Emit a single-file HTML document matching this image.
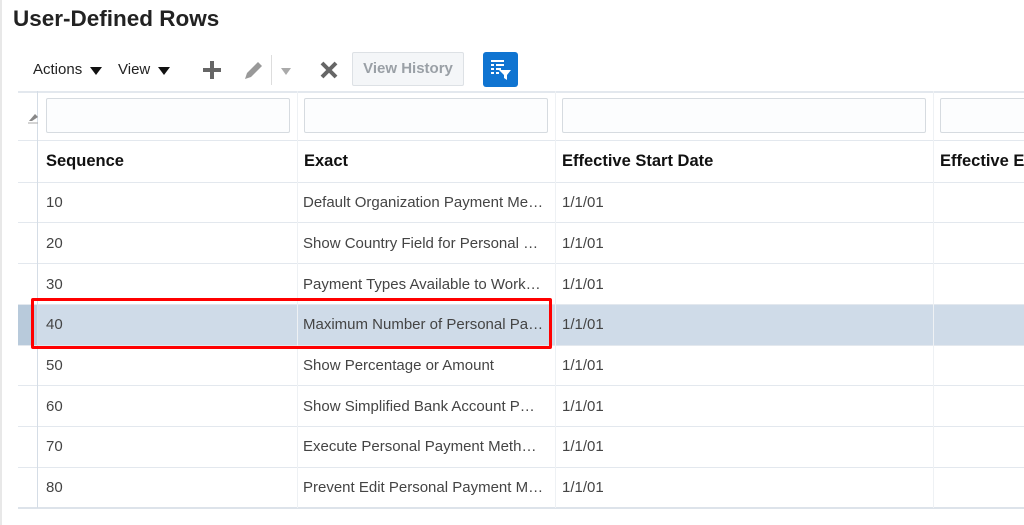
<!DOCTYPE html>
<html><head><style>
*{margin:0;padding:0;box-sizing:border-box}
html,body{width:1024px;height:525px;overflow:hidden}
body{background:#fff;font-family:"Liberation Sans",Arial,sans-serif;position:relative;color:#333}
.a{position:absolute}
h1{position:absolute;left:13px;top:6px;font-size:22.5px;font-weight:bold;color:#222}
.tb{font-size:15px;color:#222;top:61px}
.hl{position:absolute;height:1px;background:#e3e8ee;left:18px;right:0}
.vl{position:absolute;width:1px;background:#eef1f4}
.inp{position:absolute;top:98px;height:35px;border:1px solid #d6dbe0;background:#fcfdfe;border-radius:2px}
.hd{position:absolute;top:152px;font-size:16.5px;font-weight:bold;color:#111;white-space:nowrap}
.c{position:absolute;font-size:15px;color:#444;white-space:nowrap}
</style></head><body>
<div class="a" style="left:0;top:0;width:1024px;height:525px;overflow:hidden">
<div class="a" style="left:0;top:0;width:2px;height:525px;background:#e8e8e8"></div>
<h1>User-Defined Rows</h1>
<div class="a tb" style="left:33px">Actions</div>
<svg class="a" style="left:90px;top:67px" width="12" height="8"><path d="M0 0H12L6 8Z" fill="#111"/></svg>
<div class="a tb" style="left:118px">View</div>
<svg class="a" style="left:158px;top:67px" width="12" height="8"><path d="M0 0H12L6 8Z" fill="#111"/></svg>
<svg class="a" style="left:203px;top:61px" width="18" height="18"><path d="M7 0h4v7h7v4h-7v7h-4v-7h-7v-4h7z" fill="#666"/></svg>
<svg class="a" style="left:243px;top:59px" width="22" height="22"><path d="M2 20l2-6 11-11 4 4-11 11z" fill="#999"/></svg>
<div class="a" style="left:271px;top:55px;width:1px;height:30px;background:#ddd"></div>
<svg class="a" style="left:281px;top:68px" width="10" height="7"><path d="M0 0H10L5 7Z" fill="#aaa"/></svg>
<svg class="a" style="left:320px;top:61px" width="18" height="18"><path d="M2 2L16 16M16 2L2 16" stroke="#666" stroke-width="4"/></svg>
<div class="a" style="left:352px;top:52px;width:112px;height:34px;border:1px solid #dde1e5;background:#f4f6f8;border-radius:2px;color:#9aa0a6;font-weight:bold;font-size:15px;text-align:center;line-height:32px">View History</div>
<div class="a" style="left:483px;top:52px;width:35px;height:35px;background:#0f74d1;border-radius:3px"></div>
<svg class="a" style="left:490px;top:59px" width="22" height="22"><path d="M1 2h13M1 6h3M6 6h8M1 10h3M6 10h5M1 14h3M6 14h3" stroke="#fff" stroke-width="2"/><path d="M9 11h12l-4 5v5l-3-2v-3z" fill="#fff"/></svg>
<div class="a" style="left:18px;top:91px;right:0;height:2px;background:#e3e8ee"></div>
<div class="hl" style="top:140px"></div>
<div class="hl" style="top:182px"></div>
<div class="a" style="left:18px;top:304px;right:0;height:41px;background:#cfdbe8"></div>
<div class="a" style="left:18px;top:304px;width:20px;height:41px;background:#b8cadb"></div>
<div class="hl" style="top:222px"></div><div class="hl" style="top:263px"></div><div class="hl" style="top:304px"></div><div class="hl" style="top:345px"></div><div class="hl" style="top:385px"></div><div class="hl" style="top:426px"></div><div class="hl" style="top:467px"></div>
<div class="a" style="left:18px;top:507px;right:0;height:2px;background:#dde3ea"></div>
<div class="vl" style="left:37px;top:91px;height:417px;background:#d5dde6"></div>
<div class="vl" style="left:297px;top:91px;height:417px"></div>
<div class="vl" style="left:555px;top:91px;height:417px"></div>
<div class="vl" style="left:933px;top:91px;height:417px"></div>
<svg class="a" style="left:28px;top:110px" width="10" height="14"><path d="M1 11l6-7 3 3-6 4z" fill="#888"/><path d="M0 13h10" stroke="#aaa"/></svg>
<div class="inp" style="left:46px;width:244px"></div>
<div class="inp" style="left:304px;width:244px"></div>
<div class="inp" style="left:562px;width:364px"></div>
<div class="inp" style="left:940px;width:100px"></div>
<div class="hd" style="left:46px">Sequence</div>
<div class="hd" style="left:304px">Exact</div>
<div class="hd" style="left:562px">Effective Start Date</div>
<div class="hd" style="left:940px">Effective End Date</div>
<div class="c" style="left:46px;top:194px">10</div><div class="c" style="left:303px;top:194px">Default Organization Payment Me…</div><div class="c" style="left:562px;top:194px">1/1/01</div>
<div class="c" style="left:46px;top:235px">20</div><div class="c" style="left:303px;top:235px">Show Country Field for Personal …</div><div class="c" style="left:562px;top:235px">1/1/01</div>
<div class="c" style="left:46px;top:276px">30</div><div class="c" style="left:303px;top:276px">Payment Types Available to Work…</div><div class="c" style="left:562px;top:276px">1/1/01</div>
<div class="c" style="left:46px;top:316px">40</div><div class="c" style="left:303px;top:316px">Maximum Number of Personal Pa…</div><div class="c" style="left:562px;top:316px">1/1/01</div>
<div class="c" style="left:46px;top:357px">50</div><div class="c" style="left:303px;top:357px">Show Percentage or Amount</div><div class="c" style="left:562px;top:357px">1/1/01</div>
<div class="c" style="left:46px;top:398px">60</div><div class="c" style="left:303px;top:398px">Show Simplified Bank Account P…</div><div class="c" style="left:562px;top:398px">1/1/01</div>
<div class="c" style="left:46px;top:438px">70</div><div class="c" style="left:303px;top:438px">Execute Personal Payment Meth…</div><div class="c" style="left:562px;top:438px">1/1/01</div>
<div class="c" style="left:46px;top:479px">80</div><div class="c" style="left:303px;top:479px">Prevent Edit Personal Payment M…</div><div class="c" style="left:562px;top:479px">1/1/01</div>
<div class="a" style="left:31px;top:298px;width:521px;height:51px;border:3px solid #f00;border-radius:2px"></div>
</div>
</body></html>
